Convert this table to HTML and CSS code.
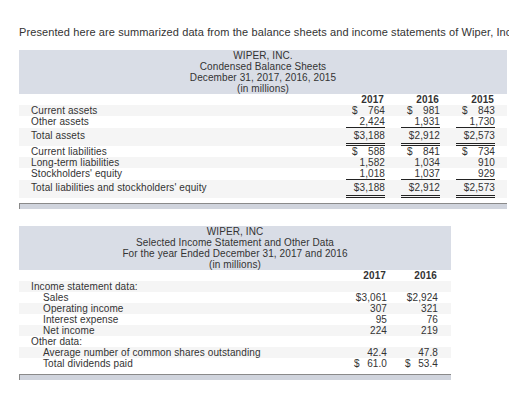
FILE: index.html
```html
<!DOCTYPE html>
<html lang="en">
<head>
<meta charset="utf-8">
<title>Wiper, Inc.</title>
<link rel="stylesheet" href="styles.css">
</head>
<body>
<div class="page">
  <p class="intro">Presented here are summarized data from the balance sheets and income statements of Wiper, Inc</p>

  <section class="block block-wide">
    <div class="title">WIPER, INC.<br>Condensed Balance Sheets<br>December 31, 2017, 2016, 2015<br>(in millions)</div>
    <table class="fin fin-bs">
      <colgroup><col class="c-lbl"><col class="c-num"><col class="c-num"><col class="c-num"><col class="c-pad"></colgroup>
      <thead>
        <tr class="yr"><td></td><th>2017</th><th>2016</th><th>2015</th><td></td></tr>
      </thead>
      <tbody>
        <tr><td class="lbl">Current assets</td>
          <td><div class="amt"><span>$</span><span>764</span></div></td>
          <td><div class="amt"><span>$</span><span>981</span></div></td>
          <td><div class="amt"><span>$</span><span>843</span></div></td><td></td></tr>
        <tr><td class="lbl">Other assets</td>
          <td><div class="amt u1"><span></span><span>2,424</span></div></td>
          <td><div class="amt u1"><span></span><span>1,931</span></div></td>
          <td><div class="amt u1"><span></span><span>1,730</span></div></td><td></td></tr>
        <tr class="total"><td class="lbl">Total assets</td>
          <td><div class="amt u2"><span></span><span>$3,188</span></div></td>
          <td><div class="amt u2"><span></span><span>$2,912</span></div></td>
          <td><div class="amt u2"><span></span><span>$2,573</span></div></td><td></td></tr>
        <tr><td class="lbl">Current liabilities</td>
          <td><div class="amt"><span>$</span><span>588</span></div></td>
          <td><div class="amt"><span>$</span><span>841</span></div></td>
          <td><div class="amt"><span>$</span><span>734</span></div></td><td></td></tr>
        <tr><td class="lbl">Long-term liabilities</td>
          <td><div class="amt"><span></span><span>1,582</span></div></td>
          <td><div class="amt"><span></span><span>1,034</span></div></td>
          <td><div class="amt"><span></span><span>910</span></div></td><td></td></tr>
        <tr><td class="lbl">Stockholders' equity</td>
          <td><div class="amt u1"><span></span><span>1,018</span></div></td>
          <td><div class="amt u1"><span></span><span>1,037</span></div></td>
          <td><div class="amt u1"><span></span><span>929</span></div></td><td></td></tr>
        <tr class="total"><td class="lbl">Total liabilities and stockholders' equity</td>
          <td><div class="amt u2"><span></span><span>$3,188</span></div></td>
          <td><div class="amt u2"><span></span><span>$2,912</span></div></td>
          <td><div class="amt u2"><span></span><span>$2,573</span></div></td><td></td></tr>
      </tbody>
    </table>
    <div class="bar"></div>
  </section>

  <section class="block block-narrow">
    <div class="title">WIPER, INC<br>Selected Income Statement and Other Data<br>For the year Ended December 31, 2017 and 2016<br>(in millions)</div>
    <table class="fin fin-is">
      <colgroup><col class="c-lbl"><col class="c-num"><col class="c-num"><col class="c-pad"></colgroup>
      <thead>
        <tr class="yr"><td></td><th>2017</th><th>2016</th><td></td></tr>
      </thead>
      <tbody>
        <tr><td class="lbl">Income statement data:</td><td></td><td></td><td></td></tr>
        <tr><td class="lbl sub">Sales</td>
          <td><div class="amt"><span></span><span>$3,061</span></div></td>
          <td><div class="amt"><span></span><span>$2,924</span></div></td><td></td></tr>
        <tr><td class="lbl sub">Operating income</td>
          <td><div class="amt"><span></span><span>307</span></div></td>
          <td><div class="amt"><span></span><span>321</span></div></td><td></td></tr>
        <tr><td class="lbl sub">Interest expense</td>
          <td><div class="amt"><span></span><span>95</span></div></td>
          <td><div class="amt"><span></span><span>76</span></div></td><td></td></tr>
        <tr><td class="lbl sub">Net income</td>
          <td><div class="amt"><span></span><span>224</span></div></td>
          <td><div class="amt"><span></span><span>219</span></div></td><td></td></tr>
        <tr><td class="lbl">Other data:</td><td></td><td></td><td></td></tr>
        <tr><td class="lbl sub">Average number of common shares outstanding</td>
          <td><div class="amt"><span></span><span>42.4</span></div></td>
          <td><div class="amt"><span></span><span>47.8</span></div></td><td></td></tr>
        <tr><td class="lbl sub">Total dividends paid</td>
          <td><div class="amt"><span>$</span><span>61.0</span></div></td>
          <td><div class="amt"><span>$</span><span>53.4</span></div></td><td></td></tr>
      </tbody>
    </table>
    <div class="bar"></div>
  </section>
</div>
</body>
</html>
```
FILE: styles.css
```css
html, body {
  margin: 0;
  padding: 0;
  background: #ffffff;
}
body {
  width: 509px;
  height: 393px;
  overflow: hidden;
  font-family: "Liberation Sans", Arial, sans-serif;
  color: #333333;
}
.page {
  padding: 0 0 0 19px;
}
.intro {
  margin: 25px 0 11px;
  font-size: 11px;
  line-height: 14px;
  letter-spacing: 0.1px;
  white-space: nowrap;
  color: #333333;
}
.block-wide { width: 488px; }
.block-narrow { width: 432px; margin-top: 17px; }

.title {
  background: #d9dde6;
  text-align: center;
  font-size: 10px;
  line-height: 11px;
  letter-spacing: 0.1px;
  height: 44px;
  color: #333333;
}
.fin {
  width: 100%;
  border-collapse: collapse;
  table-layout: fixed;
  font-size: 10px;
  line-height: 11px;
  letter-spacing: 0.1px;
}
.fin td, .fin th {
  padding: 0;
  vertical-align: top;
  white-space: nowrap;
}
.fin-bs .c-lbl { width: 311px; }
.fin-bs .c-num { width: 55px; }
.fin-bs .c-pad { width: 12px; }
.fin-is .c-lbl { width: 317px; }
.fin-is .c-num { width: 51px; }
.fin-is .c-pad { width: 13px; }

.yr th {
  text-align: right;
  font-weight: bold;
  padding-right: 1px;
  color: #333333;
}
.fin tbody tr:nth-child(odd) { background: #f5f5f5; }
.lbl { padding-left: 12px !important; overflow: hidden; }
.lbl.sub { padding-left: 24px !important; }

.amt {
  display: flex;
  justify-content: space-between;
  margin-left: auto;
  width: 33px;
}
.fin-bs .amt {
  width: 39px;
  padding-left: 6px;
  box-sizing: border-box;
}
.u1 { border-bottom: 1px solid #222222; }
.total td { padding-top: 2px; }
.u2 {
  padding-bottom: 2px;
  border-bottom: 3px double #222222;
}
.bar {
  margin-top: 5px;
  height: 5px;
  background: #d0d4dd;
  border-top: 1px solid #8a8a8a;
  border-left: 1px solid #8a8a8a;
}
```
